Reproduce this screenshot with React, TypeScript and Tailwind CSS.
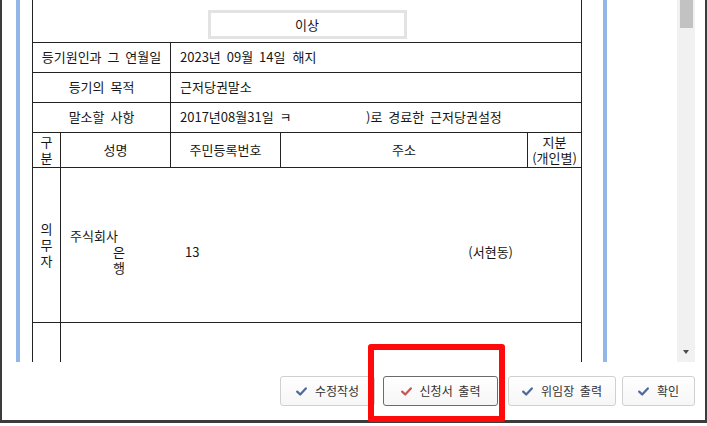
import clsx from "clsx";

const cell = "border border-[#222] align-middle";

function Check({ color }: { color: string }) {
  return (
    <svg width="11" height="9" viewBox="0 0 11 9" className="shrink-0">
      <path
        d="M1.2 4.6 L4.2 7.5 L9.8 1.4"
        fill="none"
        stroke={color}
        strokeWidth="2.2"
        strokeLinecap="round"
        strokeLinejoin="round"
      />
    </svg>
  );
}

function Button({
  label,
  className,
  active,
}: {
  label: string;
  className: string;
  active?: boolean;
}) {
  return (
    <button
      className={clsx(
        "flex h-[30px] items-center justify-center gap-[8px] rounded-[3px] border bg-gradient-to-b from-white to-[#f6f6f6] text-[12px] text-[#333]",
        active ? "border-[#6b6b6b]" : "border-[#d0d0d0]",
        className,
      )}
    >
      <Check color={active ? "#c8554f" : "#4c6a9e"} />
      <span className="[word-spacing:3px]">{label}</span>
    </button>
  );
}

function Stack({ chars }: { chars: string[] }) {
  return (
    <div className="flex flex-col items-center">
      {chars.map((c) => (
        <span key={c} className="block h-[16px] overflow-visible leading-[16px]">
          {c}
        </span>
      ))}
    </div>
  );
}

export default function App() {
  return (
    <div className="relative h-[426px] w-[707px] overflow-hidden bg-white font-['Noto_Sans_CJK_KR',sans-serif] text-[#161616]">
      <div className="flex h-[423px] flex-col border-x-2 border-b-[3px] border-[#3c3c3c]">
        {/* document view */}
        <div className="flex h-[362px] shrink-0">
          <div className="ml-[14px] w-[4px] bg-[#93b6e9]" />
          <div className="ml-[12px] w-[549px]">
            <table className="w-[549px] table-fixed border-collapse text-[13px] [word-spacing:3px]">
              <colgroup>
                <col className="w-[28px]" />
                <col className="w-[110px]" />
                <col className="w-[110px]" />
                <col className="w-[247px]" />
                <col className="w-[54px]" />
              </colgroup>
              <tbody>
                <tr>
                  <td colSpan={5} className="h-[42px] border-x border-b border-[#222] pt-[10px] align-top">
                    <div className="mx-auto flex h-[29px] w-[199px] items-center justify-center border-[3px] border-[#e3e3e3]">
                      이상
                    </div>
                  </td>
                </tr>
                <tr>
                  <td colSpan={2} className={clsx(cell, "h-[30px] text-center")}>
                    등기원인과 그 연월일
                  </td>
                  <td colSpan={3} className={clsx(cell, "pl-[9px]")}>
                    <span>2023년 09월 14일</span>
                    <span className="ml-[7px]">해지</span>
                  </td>
                </tr>
                <tr>
                  <td colSpan={2} className={clsx(cell, "h-[30px] text-center")}>
                    등기의 목적
                  </td>
                  <td colSpan={3} className={clsx(cell, "pl-[9px]")}>
                    근저당권말소
                  </td>
                </tr>
                <tr>
                  <td colSpan={2} className={clsx(cell, "h-[30px] text-center")}>
                    말소할 사항
                  </td>
                  <td colSpan={3} className={clsx(cell, "pl-[9px]")}>
                    <div className="flex">
                      <span className="w-[186px]">2017년08월31일 ㅋ</span>
                      <span>)로 경료한 근저당권설정</span>
                    </div>
                  </td>
                </tr>
                <tr className="text-center">
                  <td className={clsx(cell, "h-[35px]")}>
                    <Stack chars={["구", "분"]} />
                  </td>
                  <td className={cell}>성명</td>
                  <td className={cell}>주민등록번호</td>
                  <td className={cell}>주소</td>
                  <td className={cell}>
                    <div className="flex flex-col items-center leading-[16px] [word-spacing:0px]">
                      <span>지분</span>
                      <span>(개인별)</span>
                    </div>
                  </td>
                </tr>
                <tr>
                  <td className={clsx(cell, "h-[155px]")}>
                    <Stack chars={["의", "무", "자"]} />
                  </td>
                  <td colSpan={4} className={clsx(cell, "pt-[15px]")}>
                    <div className="flex items-center">
                      <div className="w-[110px] pl-[9px] leading-[16px]">
                        <div>주식회사</div>
                        <div className="pl-[43px]">은</div>
                        <div className="pl-[43px]">행</div>
                      </div>
                      <span className="pl-[14px]">13</span>
                      <span className="ml-auto pr-[68px]">(서현동)</span>
                    </div>
                  </td>
                </tr>
                <tr>
                  <td className={clsx(cell, "h-[40px] border-b-0")} />
                  <td colSpan={4} className={clsx(cell, "border-b-0")} />
                </tr>
              </tbody>
            </table>
          </div>
          <div className="ml-[22px] w-[4px] bg-[#93b6e9]" />
          {/* scrollbar */}
          <div className="ml-[70px] flex w-[18px] flex-col items-center bg-[#f1f1f1] pb-[8px]">
            <div className="h-[28px] w-[13px] bg-[#c2c2c2]" />
            <div className="mt-auto h-0 w-0 border-x-[3.5px] border-t-[4px] border-x-transparent border-t-[#4a4a4a]" />
          </div>
        </div>
        {/* buttons */}
        <div className="flex flex-1 items-start justify-end gap-[7px] pr-[10px] pt-[14px]">
          <Button label="수정작성" className="w-[95px]" />
          <Button label="신청서 출력" className="ml-[1px] w-[115px]" active />
          <Button label="위임장 출력" className="ml-[3px] w-[108px]" />
          <Button label="확인" className="ml-[-1px] w-[73px]" />
        </div>
      </div>
      {/* highlight annotation */}
      <div className="absolute left-[368px] top-[344px] h-[78px] w-[137px] rounded-[3px] border-[6px] border-[#ff0a0a]" />
    </div>
  );
}
